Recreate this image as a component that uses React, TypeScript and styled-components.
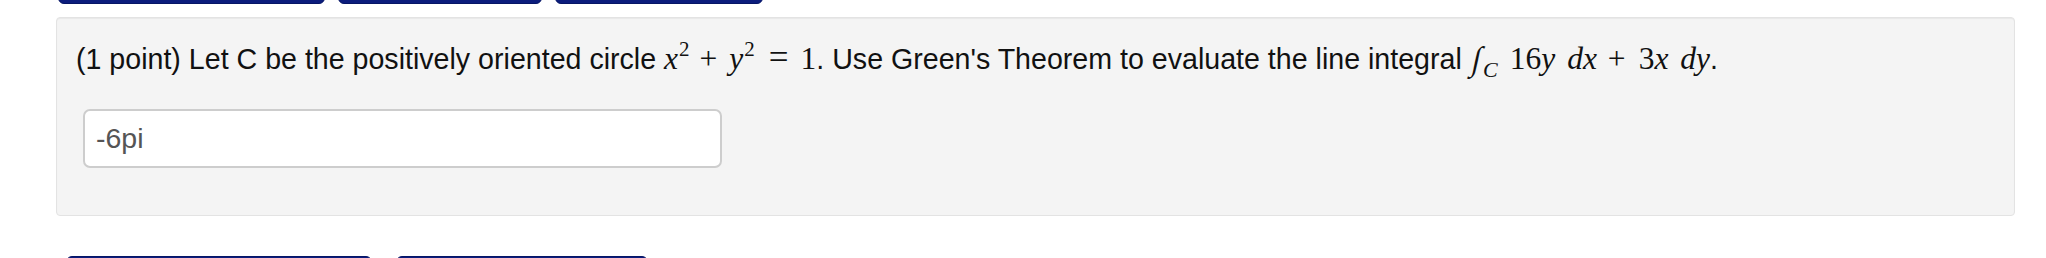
import React from "react";
import styled, { createGlobalStyle } from "styled-components";

const Global = createGlobalStyle`
  html, body { margin: 0; padding: 0; background: #ffffff; overflow: hidden; }
  body { font-family: "Liberation Sans", Arial, sans-serif; }
`;

const Page = styled.div`
  width: 2046px;
  height: 258px;
  overflow: hidden;
  display: flex;
  flex-direction: column;
  & > * { flex-shrink: 0; }
`;

const NavRow = styled.div<{ $height: number; $left: number }>`
  display: flex;
  align-items: flex-end;
  gap: 13px;
  height: ${(p) => p.$height}px;
  overflow: hidden;
  padding-left: ${(p) => p.$left}px;
`;

const BottomRow = styled.div<{ $left: number }>`
  display: flex;
  align-items: flex-start;
  gap: 24px;
  margin-top: 40px;
  padding-left: ${(p) => p.$left}px;
`;

const NavButton = styled.button<{ $w: number }>`
  width: ${(p) => p.$w}px;
  height: 40px;
  flex-shrink: 0;
  background: #0b1c7c;
  border: 1px solid #061565;
  border-radius: 6px;
  padding: 0;
`;

const Well = styled.div`
  margin: 13px 0 0 56px;
  width: 1959px;
  box-sizing: border-box;
  height: 199px;
  background: #f4f4f4;
  border: 1px solid #e3e3e3;
  border-radius: 4px;
  box-shadow: inset 0 1px 1px rgba(0, 0, 0, 0.05);
  padding: 22px 19px 0 19px;
`;

const Problem = styled.p`
  margin: 0;
  font-size: 28.6px;
  line-height: 36px;
  color: #111;
  white-space: nowrap;
`;

const M = styled.span`
  font-family: "Liberation Serif", "Times New Roman", serif;
  font-size: 31.5px;
`;

const MI = styled.i<{ $gap?: number }>`
  font-family: "Liberation Serif", "Times New Roman", serif;
  font-style: italic;
  margin-left: ${(p) => p.$gap ?? 0}px;
`;

const Sup = styled.sup<{ $gap: number }>`
  font-size: 21px;
  vertical-align: 13px;
  line-height: 0;
  margin-left: ${(p) => p.$gap}px;
`;

const Sub = styled.sub`
  font-size: 22px;
  vertical-align: -8px;
  line-height: 0;
  margin-right: 12px;
`;

const Op = styled.span<{ $l: number; $r: number; $size?: number }>`
  margin: 0 ${(p) => p.$r}px 0 ${(p) => p.$l}px;
  font-size: ${(p) => (p.$size ? `${p.$size}px` : "inherit")};
`;

const Integral = styled.span`
  font-size: 30px;
  display: inline-block;
  transform: skewX(-12deg) scaleY(1.12);
  margin: 0 2px 0 3px;
`;

const AnswerBox = styled.div`
  margin: 32px 0 0 7px;
  width: 639px;
  height: 59px;
  box-sizing: border-box;
  background: #ffffff;
  border: 2px solid #cdcdcd;
  border-radius: 7px;
  display: flex;
  align-items: center;
  padding-left: 11px;
  font-size: 28.5px;
  color: #555;
`;

export default function App() {
  return (
    <>
      <Global />
      <Page>
        <NavRow $height={4} $left={58}>
          <NavButton $w={267} />
          <NavButton $w={204} />
          <NavButton $w={208} />
        </NavRow>
        <Well>
          <Problem>
            (1 point) Let C be the positively oriented circle{" "}
            <M>
              <MI>x</MI>
              <Sup $gap={1}>2</Sup>
              <Op $l={10} $r={12}>+</Op>
              <MI>y</MI>
              <Sup $gap={1}>2</Sup>
              <Op $l={14} $r={12} $size={35}>=</Op>1
            </M>
            . Use Green's Theorem to evaluate the line integral{" "}
            <M>
              <Integral>∫</Integral>
              <Sub>
                <MI>C</MI>
              </Sub>
              16<MI>y</MI>
              <MI $gap={12}>dx</MI>
              <Op $l={11} $r={13}>+</Op>3<MI>x</MI>
              <MI $gap={12}>dy</MI>
            </M>
            .
          </Problem>
          <AnswerBox>-6pi</AnswerBox>
        </Well>
        <BottomRow $left={66}>
          <NavButton $w={306} />
          <NavButton $w={252} />
        </BottomRow>
      </Page>
    </>
  );
}
